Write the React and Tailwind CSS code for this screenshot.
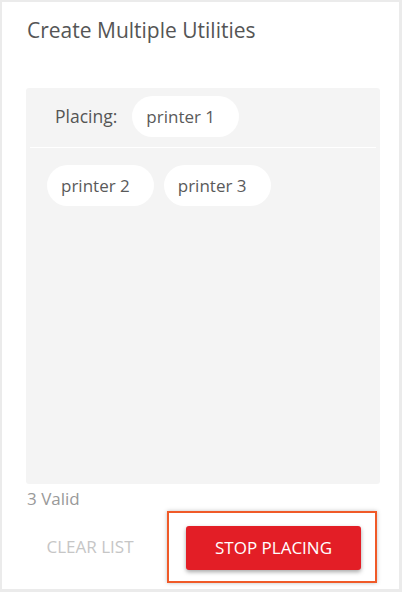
import React from 'react';

const Pill = ({ children }) => (
  <span className="inline-flex items-center h-[41px] pl-[14px] pr-[24px] rounded-full bg-white text-[17px] text-[#5a5a5a]">
    {children}
  </span>
);

const App = () => {
  const queue = ['printer 2', 'printer 3'];

  return (
    <div
      className="w-[402px] h-[592px] bg-white border-l-2 border-t-2 border-r-[3px] border-b-[3px] border-[#ebebeb] flex flex-col"
      style={{ fontFamily: '"Open Sans", sans-serif' }}
    >
      {/* Title */}
      <h1 className="pl-[25px] pt-[14px] text-[21px] text-[#555] leading-[28px]">
        Create Multiple Utilities
      </h1>

      {/* Utility list */}
      <div className="mt-[44px] ml-[24px] w-[354px] h-[396px] bg-[#f4f4f4] rounded-[3px] flex flex-col">
        <div className="flex items-center pt-[8px] pb-[10px] pl-[29px] gap-[15px]">
          <span className="text-[17.5px] text-[#555]">Placing:</span>
          <Pill>printer 1</Pill>
        </div>
        <div className="mx-[4px] h-px bg-white" />
        <div className="flex flex-wrap gap-[10px] pt-[17px] pl-[21px]">
          {queue.map(name => (
            <Pill key={name}>{name}</Pill>
          ))}
        </div>
      </div>

      <p className="pl-[25px] mt-[4px] text-[17px] text-[#999] leading-[22px]">3 Valid</p>

      {/* Actions */}
      <div className="flex items-center mt-[1px] pl-[19px]">
        <button className="w-[138px] text-[17px] text-[#c6c6c6] uppercase text-center">
          Clear list
        </button>
        <div className="ml-[8px] border-2 border-[#f05a28] shadow-[0_0_4px_rgba(0,0,0,0.25)] pl-[17px] pr-[14px] pt-[13px] pb-[11px]">
          <button className="w-[175px] h-[44px] rounded-[3px] bg-[#e31e26] text-white text-[17px] uppercase shadow-[0_2px_4px_rgba(0,0,0,0.35)]">
            Stop placing
          </button>
        </div>
      </div>
    </div>
  );
};

export default App;
